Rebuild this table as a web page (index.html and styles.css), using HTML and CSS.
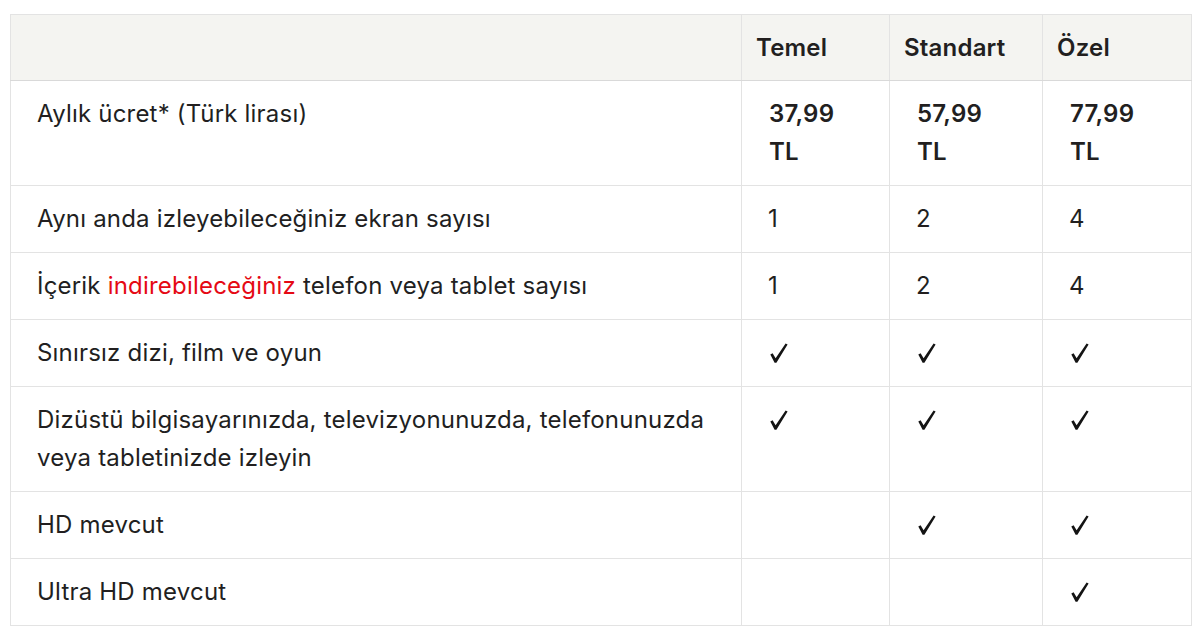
FILE: index.html
```html
<!DOCTYPE html>
<html lang="tr">
<head>
<meta charset="utf-8">
<title>Planlar</title>
<link rel="stylesheet" href="styles.css">
</head>
<body>
<div class="page">
<table class="plans">
  <colgroup>
    <col class="c-feat">
    <col class="c-basic">
    <col class="c-std">
    <col class="c-prem">
  </colgroup>
  <thead>
    <tr>
      <th></th>
      <th>Temel</th>
      <th>Standart</th>
      <th>Özel</th>
    </tr>
  </thead>
  <tbody>
    <tr>
      <td>Aylık ücret* (Türk lirası)</td>
      <td class="price"><span class="amount">37,99 TL</span></td>
      <td class="price"><span class="amount">57,99 TL</span></td>
      <td class="price"><span class="amount">77,99 TL</span></td>
    </tr>
    <tr>
      <td>Aynı anda izleyebileceğiniz ekran sayısı</td>
      <td>1</td>
      <td>2</td>
      <td>4</td>
    </tr>
    <tr>
      <td>İçerik <a class="link" href="#">indirebileceğiniz</a> telefon veya tablet sayısı</td>
      <td>1</td>
      <td>2</td>
      <td>4</td>
    </tr>
    <tr>
      <td>Sınırsız dizi, film ve oyun</td>
      <td class="check"><svg class="tick" viewBox="0 0 18 20" aria-label="✓"><path d="M0.3 11.6 L2.6 10.2 L5.6 15.2 L15.6 0.4 L17.6 1.4 L6.4 19.8 L4.6 19.8 Z"/></svg></td>
      <td class="check"><svg class="tick" viewBox="0 0 18 20" aria-label="✓"><path d="M0.3 11.6 L2.6 10.2 L5.6 15.2 L15.6 0.4 L17.6 1.4 L6.4 19.8 L4.6 19.8 Z"/></svg></td>
      <td class="check"><svg class="tick" viewBox="0 0 18 20" aria-label="✓"><path d="M0.3 11.6 L2.6 10.2 L5.6 15.2 L15.6 0.4 L17.6 1.4 L6.4 19.8 L4.6 19.8 Z"/></svg></td>
    </tr>
    <tr>
      <td>Dizüstü bilgisayarınızda, televizyonunuzda, telefonunuzda veya tabletinizde izleyin</td>
      <td class="check"><svg class="tick" viewBox="0 0 18 20" aria-label="✓"><path d="M0.3 11.6 L2.6 10.2 L5.6 15.2 L15.6 0.4 L17.6 1.4 L6.4 19.8 L4.6 19.8 Z"/></svg></td>
      <td class="check"><svg class="tick" viewBox="0 0 18 20" aria-label="✓"><path d="M0.3 11.6 L2.6 10.2 L5.6 15.2 L15.6 0.4 L17.6 1.4 L6.4 19.8 L4.6 19.8 Z"/></svg></td>
      <td class="check"><svg class="tick" viewBox="0 0 18 20" aria-label="✓"><path d="M0.3 11.6 L2.6 10.2 L5.6 15.2 L15.6 0.4 L17.6 1.4 L6.4 19.8 L4.6 19.8 Z"/></svg></td>
    </tr>
    <tr>
      <td>HD mevcut</td>
      <td class="check"></td>
      <td class="check"><svg class="tick" viewBox="0 0 18 20" aria-label="✓"><path d="M0.3 11.6 L2.6 10.2 L5.6 15.2 L15.6 0.4 L17.6 1.4 L6.4 19.8 L4.6 19.8 Z"/></svg></td>
      <td class="check"><svg class="tick" viewBox="0 0 18 20" aria-label="✓"><path d="M0.3 11.6 L2.6 10.2 L5.6 15.2 L15.6 0.4 L17.6 1.4 L6.4 19.8 L4.6 19.8 Z"/></svg></td>
    </tr>
    <tr>
      <td>Ultra HD mevcut</td>
      <td class="check"></td>
      <td class="check"></td>
      <td class="check"><svg class="tick" viewBox="0 0 18 20" aria-label="✓"><path d="M0.3 11.6 L2.6 10.2 L5.6 15.2 L15.6 0.4 L17.6 1.4 L6.4 19.8 L4.6 19.8 Z"/></svg></td>
    </tr>
  </tbody>
</table>
</div>
</body>
</html>
```

FILE: styles.css
```css
html, body {
  margin: 0;
  padding: 0;
  background: #ffffff;
}

.page {
  padding: 14px 10px 0 10px;
}

.plans {
  border-collapse: collapse;
  table-layout: fixed;
  width: 1181px;
  font-family: "Inter", "Noto Sans", sans-serif;
  font-size: 24px;
  line-height: 38px;
  letter-spacing: 0.2px;
  color: #221f1f;
  border: 1px solid #d0d0d0;
}

.c-feat { width: 731px; }
.c-basic { width: 148px; }
.c-std { width: 153px; }
.c-prem { width: 149px; }

.plans th,
.plans td {
  border: 1px solid #e3e3e3;
  text-align: left;
  vertical-align: top;
}

.plans thead th {
  background: #f4f4f1;
  font-weight: 600;
  height: 65px;
  padding: 0 14px;
  vertical-align: middle;
  border-bottom-color: #d9d9d9;
}

.plans td {
  padding: 14px 26px 14px 26px;
}

.plans td.price {
  font-weight: 600;
  padding-left: 27px;
  padding-right: 20px;
}

.amount {
  display: block;
  width: min-content;
}

.plans td.check {
  padding-left: 28px;
}

.tick {
  display: block;
  width: 18px;
  height: 20px;
  margin-top: 9px;
  fill: #141414;
}

.link {
  color: #e50914;
  text-decoration: none;
}
```
